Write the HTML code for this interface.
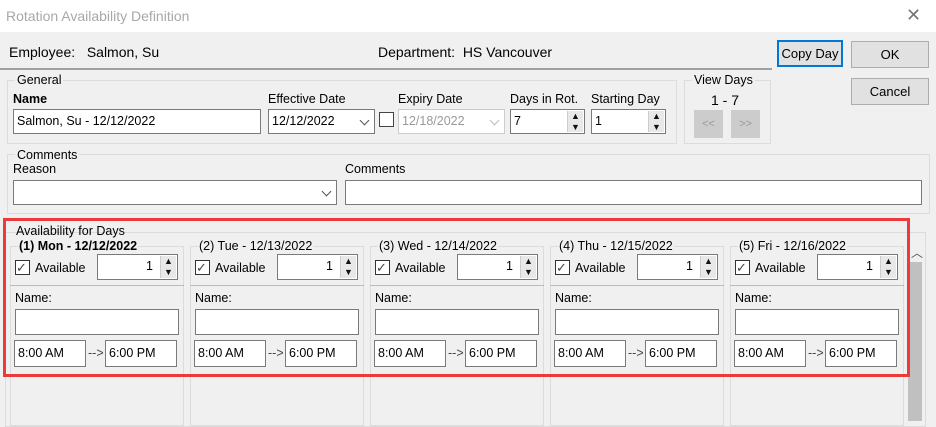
<!DOCTYPE html><html><head><style>
*{box-sizing:border-box;margin:0;padding:0}
body{width:936px;height:421px;overflow:hidden;background:#f0f0f0;font-family:"Liberation Sans",sans-serif;font-size:12.5px;color:#000;position:relative}
.a{position:absolute;white-space:nowrap}
.in{position:absolute;background:#fff;border:1px solid #7a7a7a;padding-left:3px;line-height:22px}
.grp{position:absolute;border:1px solid #dcdcdc}
.btn{position:absolute;background:#e1e1e1;border:1px solid #adadad;text-align:center}
.spin{position:absolute;right:1px;top:1px;bottom:1px;width:16px;background:#e8e8e8;border-left:1px solid #ccc;font-size:9px;line-height:11px;text-align:center;color:#111}
.cb{position:absolute;width:15px;height:15px;border:1px solid #333;background:#fff}
.dd{position:absolute;right:6px;top:5px;width:7px;height:7px;border-right:1px solid #555;border-bottom:1px solid #555;transform:rotate(45deg)}
</style></head><body>
<div class="a" style="left:0;top:0;width:936px;height:32px;background:#fff"></div>
<div class="a" style="left:6px;top:8px;color:#a8a8a8;font-size:14px">Rotation Availability Definition</div>
<div class="a" style="left:906px;top:5px;color:#777;font-size:18px;font-weight:300">✕</div>
<div class="a" style="left:9px;top:44px;font-size:14px">Employee:&nbsp;&nbsp; Salmon, Su</div>
<div class="a" style="left:378px;top:44px;font-size:14px">Department:&nbsp; HS Vancouver</div>
<div class="a" style="left:0;top:68px;width:772px;height:2px;background:#a0a0a0"></div>
<div class="btn" style="left:777px;top:40px;width:66px;height:27px;border:2px solid #0078d7;line-height:23px;font-size:13px">Copy Day</div>
<div class="btn" style="left:851px;top:41px;width:78px;height:27px;line-height:25px;font-size:13px">OK</div>
<div class="btn" style="left:851px;top:78px;width:78px;height:27px;line-height:25px;font-size:13px">Cancel</div>

<div class="grp" style="left:7px;top:80px;width:670px;height:64px"></div>
<div class="a" style="left:15px;top:73px;background:#f0f0f0;padding:0 2px">General</div>
<div class="a" style="left:13px;top:92px;font-weight:bold">Name</div>
<div class="in" style="left:13px;top:109px;width:248px;height:25px">Salmon, Su - 12/12/2022</div>
<div class="a" style="left:268px;top:92px">Effective Date</div>
<div class="in" style="left:268px;top:109px;width:107px;height:25px">12/12/2022<div class="dd" style="top:7px"></div></div>
<div class="cb" style="left:379px;top:112px;border-color:#444"></div>
<div class="a" style="left:398px;top:92px">Expiry Date</div>
<div class="in" style="left:398px;top:109px;width:107px;height:25px;color:#999;border-color:#ccc">12/18/2022<div class="dd" style="top:7px;border-color:#bbb"></div></div>
<div class="a" style="left:510px;top:92px">Days in Rot.</div>
<div class="in" style="left:510px;top:109px;width:75px;height:25px">7<div class="spin">▲<br>▼</div></div>
<div class="a" style="left:591px;top:92px">Starting Day</div>
<div class="in" style="left:591px;top:109px;width:75px;height:25px">1<div class="spin">▲<br>▼</div></div>
<div class="grp" style="left:684px;top:80px;width:87px;height:64px"></div>
<div class="a" style="left:692px;top:73px;background:#f0f0f0;padding:0 2px">View Days</div>
<div class="a" style="left:711px;top:92px;font-size:14px">1 - 7</div>
<div class="btn" style="left:694px;top:110px;width:29px;height:28px;background:#ccc;border-color:#ccc;color:#999;line-height:26px;font-size:11px">&lt;&lt;</div>
<div class="btn" style="left:731px;top:110px;width:29px;height:28px;background:#ccc;border-color:#ccc;color:#999;line-height:26px;font-size:11px">&gt;&gt;</div>

<div class="grp" style="left:7px;top:154px;width:923px;height:60px"></div>
<div class="a" style="left:15px;top:148px;background:#f0f0f0;padding:0 2px">Comments</div>
<div class="a" style="left:13px;top:162px">Reason</div>
<div class="in" style="left:13px;top:180px;width:324px;height:25px"><div class="dd" style="top:7px"></div></div>
<div class="a" style="left:345px;top:162px">Comments</div>
<div class="in" style="left:345px;top:180px;width:577px;height:25px"></div>

<div class="grp" style="left:5px;top:232px;width:921px;height:195px"></div>
<div class="a" style="left:908px;top:262px;width:14px;height:159px;background:#c0c0c0"></div>
<div class="a" style="left:911px;top:244px;color:#555;font-size:12px">︿</div>
<div class="a" style="left:16px;top:224px">Availability for Days</div>

<div id="cols"></div>
<script>
var d=[["(1) Mon - 12/12/2022",1],["(2) Tue - 12/13/2022"],["(3) Wed - 12/14/2022"],["(4) Thu - 12/15/2022"],["(5) Fri - 12/16/2022"]],h="";
d.forEach(function(c,i){var x=10+i*180;
h+='<div class="grp" style="left:'+x+'px;top:246px;width:174px;height:180px"></div>';
h+='<div class="a" style="left:'+(x+8)+'px;top:239px;background:#f0f0f0;padding:0 1px;'+(c[1]?'font-weight:bold':'')+'">'+c[0]+'</div>';
h+='<div class="cb" style="left:'+(x+5)+'px;top:260px;font-size:13px;line-height:13px;color:#444">✓</div>';
h+='<div class="a" style="left:'+(x+25)+'px;top:261px">Available</div>';
h+='<div class="in" style="left:'+(x+87)+'px;top:254px;width:81px;height:26px;text-align:right;padding-right:24px">1<div class="spin">▲<br>▼</div></div>';
h+='<div class="a" style="left:'+x+'px;top:285px;width:174px;height:1px;background:#bbb"></div>';
h+='<div class="a" style="left:'+(x+5)+'px;top:291px">Name:</div>';
h+='<div class="in" style="left:'+(x+5)+'px;top:309px;width:164px;height:26px"></div>';
h+='<div class="in" style="left:'+(x+4)+'px;top:340px;width:72px;height:27px;line-height:25px">8:00 AM</div>';
h+='<div class="a" style="left:'+(x+78)+'px;top:346px;color:#444">--&gt;</div>';
h+='<div class="in" style="left:'+(x+95)+'px;top:340px;width:72px;height:27px;line-height:25px">6:00 PM</div>';});
document.getElementById('cols').innerHTML=h;
</script>
<div class="a" style="left:3px;top:218px;width:907px;height:159px;border:3px solid #ec3b3b"></div>
</body></html>
